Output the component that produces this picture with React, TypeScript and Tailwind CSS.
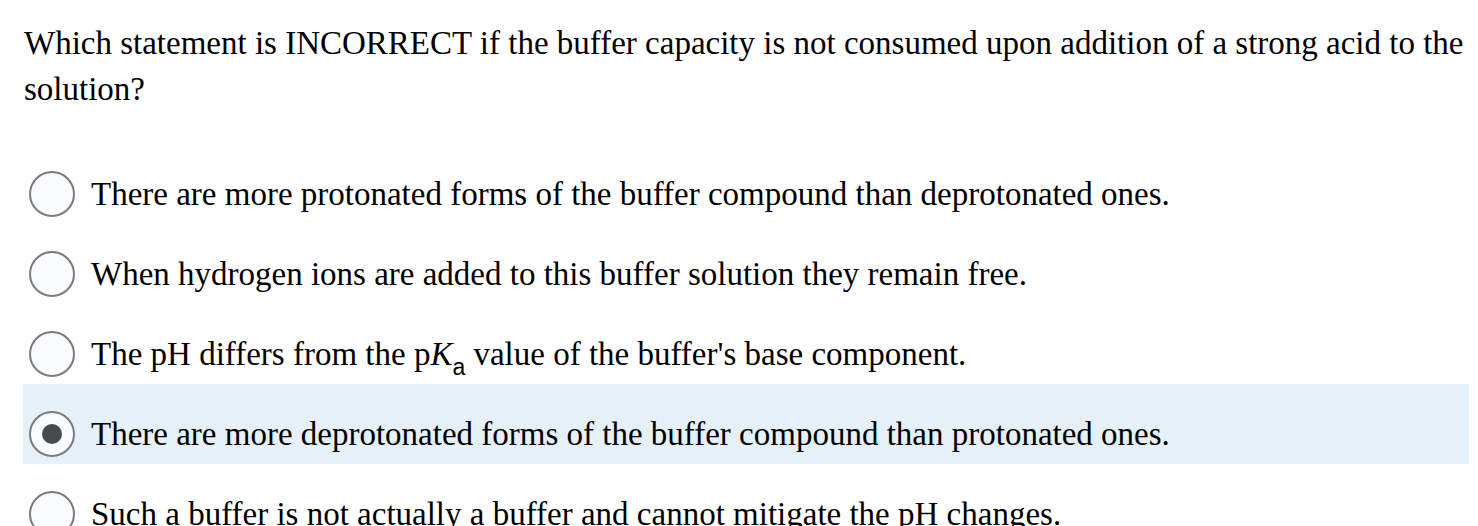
import { useState } from 'react';

type Choice = { id: string; label: React.ReactNode };

const choices: Choice[] = [
  { id: 'a', label: 'There are more protonated forms of the buffer compound than deprotonated ones.' },
  { id: 'b', label: 'When hydrogen ions are added to this buffer solution they remain free.' },
  {
    id: 'c',
    label: (
      <>
        The pH differs from the p<i>K</i>
        <sub className="font-['Liberation_Sans',sans-serif] text-[23px] relative top-[2px] align-sub leading-none">a</sub>{' '}
        value of the buffer's base component.
      </>
    ),
  },
  { id: 'd', label: 'There are more deprotonated forms of the buffer compound than protonated ones.' },
  { id: 'e', label: 'Such a buffer is not actually a buffer and cannot mitigate the pH changes.' },
];

function Radio({ checked }: { checked: boolean }) {
  return (
    <span className="flex h-[46px] w-[46px] shrink-0 items-center justify-center rounded-full border-2 border-[#7b7b7b] bg-[#f8fbff]">
      {checked && <span className="h-[20px] w-[20px] rounded-full bg-[#46494e]" />}
    </span>
  );
}

export default function App() {
  const [picked, setPicked] = useState('d');

  return (
    <div className="min-h-screen bg-white font-['Liberation_Serif','Times_New_Roman',serif] text-[33px] text-black">
      <p className="px-[24px] pt-[20px] pr-[12px] leading-[46px]">
        Which statement is INCORRECT if the buffer capacity is not consumed upon addition of a strong acid to the
        solution?
      </p>

      <ul className="ml-[23px] mr-[9px] mt-[32px]">
        {choices.map((c) => (
          <li
            key={c.id}
            onClick={() => setPicked(c.id)}
            className={
              'flex h-[80px] cursor-pointer items-center gap-[16px] pt-[20px] pl-[6px] ' +
              (picked === c.id ? 'bg-[#e6f0f9]' : '')
            }
          >
            <Radio checked={picked === c.id} />
            <span className="leading-[46px]">{c.label}</span>
          </li>
        ))}
      </ul>
    </div>
  );
}
